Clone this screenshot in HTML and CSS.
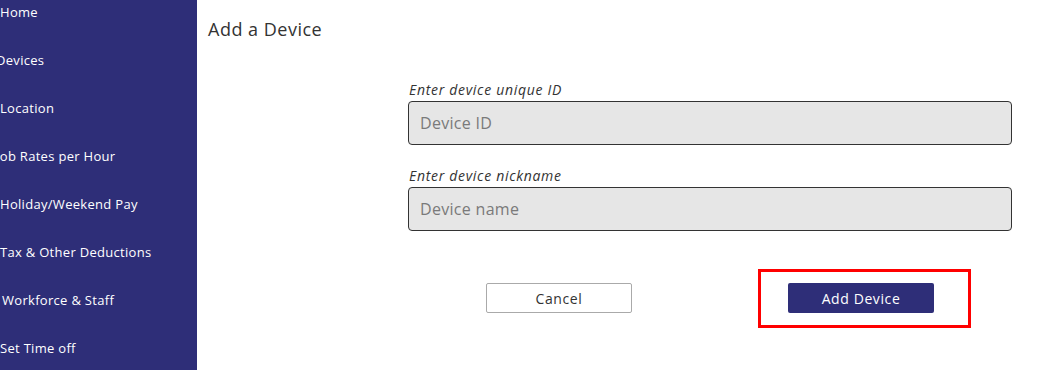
FILE: index.html
```html
<!DOCTYPE html>
<html>
<head>
<meta charset="utf-8">
<link rel="stylesheet" href="styles.css">
</head>
<body>
<div class="app">
  <nav class="sidebar">
    <a class="nav-item">Home</a>
    <a class="nav-item shift">Devices</a>
    <a class="nav-item">Location</a>
    <a class="nav-item shift">Job Rates per Hour</a>
    <a class="nav-item">Holiday/Weekend Pay</a>
    <a class="nav-item">Tax &amp; Other Deductions</a>
    <a class="nav-item in">Workforce &amp; Staff</a>
    <a class="nav-item">Set Time off</a>
  </nav>
  <main class="main">
    <h1 class="title">Add a Device</h1>
    <form class="form">
      <label class="label">Enter device unique ID</label>
      <input class="input" type="text" placeholder="Device ID">
      <label class="label second">Enter device nickname</label>
      <input class="input" type="text" placeholder="Device name">
      <div class="actions">
        <div class="half"><button type="button" class="btn cancel">Cancel</button></div>
        <div class="half"><div class="highlight"><button type="button" class="btn primary">Add Device</button></div></div>
      </div>
    </form>
  </main>
</div>
</body>
</html>
```
FILE: styles.css
```css
* { box-sizing: border-box; }
html, body { margin: 0; padding: 0; }
body {
  font-family: "Open Sans", "Liberation Sans", sans-serif;
  background: #fff;
  width: 1044px;
  height: 370px;
  overflow: hidden;
}
.app { display: flex; height: 370px; }
.sidebar {
  width: 197px;
  flex: none;
  background: #2e2e78;
  display: flex;
  flex-direction: column;
  overflow: hidden;
}
.nav-item {
  color: #fff;
  font-size: 13px;
  font-weight: 500;
  letter-spacing: 0.3px;
  height: 48px;
  flex: none;
  line-height: 24px;
  white-space: nowrap;
}
.nav-item.shift { margin-left: -4px; }
.nav-item.in { margin-left: 2px; }
.main { flex: 1; padding-left: 11px; }
.title {
  font-size: 18px;
  font-weight: 400;
  letter-spacing: 0.5px;
  color: #333;
  margin: 17px 0 0;
  line-height: 24px;
}
.form {
  width: 604px;
  margin-left: 200px;
  margin-top: 39px;
  display: flex;
  flex-direction: column;
}
.label {
  font-style: italic;
  font-size: 14px;
  letter-spacing: 0.7px;
  color: #333;
  line-height: 20px;
  margin-left: 1px;
  margin-bottom: 1px;
}
.label.second { margin-top: 21px; }
.input {
  height: 44px;
  border: 1px solid #333;
  border-radius: 4px;
  background: #e6e6e6;
  font-family: inherit;
  font-size: 16px;
  letter-spacing: 0.3px;
  padding: 0 11px;
  color: #333;
  outline: none;
}
.input::placeholder { color: #7a7a7a; }
.actions {
  display: flex;
  margin-top: 37px;
}
.half {
  flex: 1;
  display: flex;
  justify-content: center;
  align-items: center;
}
.highlight {
  border: 3px solid #ff0000;
  padding: 11px 34px 12px 27px;
  margin-left: 7px;
  margin-top: 1px;
}
.btn {
  width: 146px;
  height: 30px;
  font-family: inherit;
  font-size: 14px;
  letter-spacing: 0.6px;
  border-radius: 2px;
  cursor: pointer;
}
.cancel {
  background: #fff;
  border: 1px solid #aaa;
  color: #333;
}
.primary {
  background: #2e2e78;
  border: none;
  color: #fff;
  font-weight: 500;
}
```
